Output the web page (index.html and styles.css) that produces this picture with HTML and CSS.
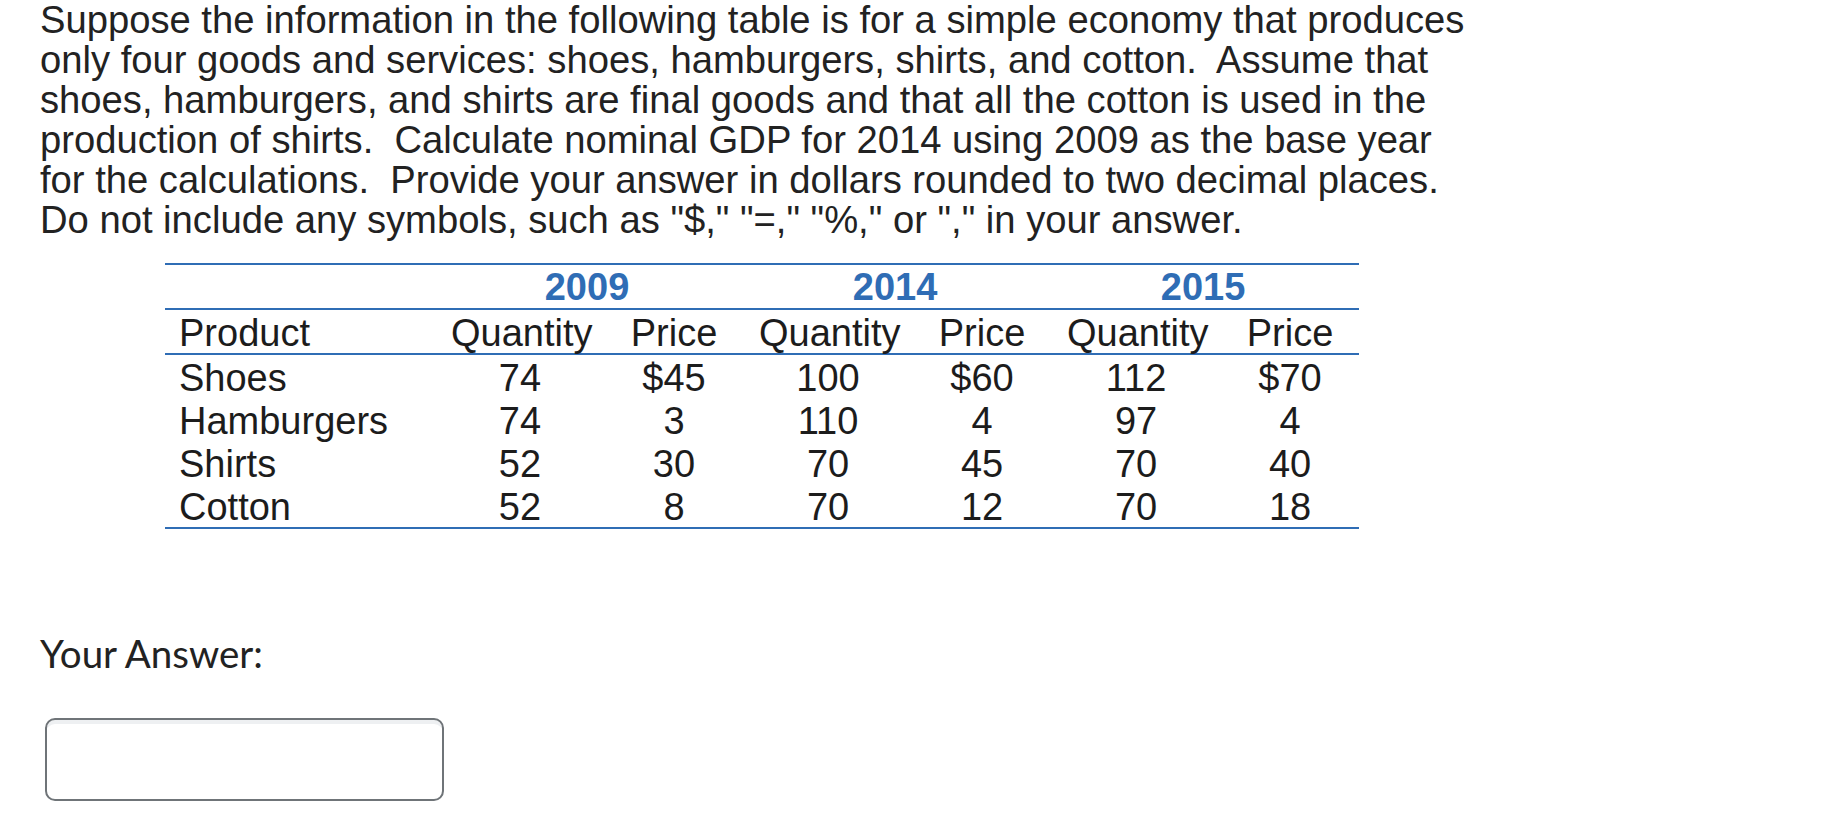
FILE: index.html
```html
<!DOCTYPE html>
<html lang="en">
<head>
<meta charset="utf-8">
<title>Question</title>
<link rel="stylesheet" href="styles.css">
</head>
<body>
<main class="page">
  <p class="question">Suppose the information in the following table is for a simple economy that produces<br>only four goods and services: shoes, hamburgers, shirts, and cotton.&nbsp; Assume that<br>shoes, hamburgers, and shirts are final goods and that all the cotton is used in the<br>production of shirts.&nbsp; Calculate nominal GDP for 2014 using 2009 as the base year<br>for the calculations.&nbsp; Provide your answer in dollars rounded to two decimal places.<br>Do not include any symbols, such as "$," "=," "%," or "," in your answer.</p>

  <table class="data">
    <colgroup>
      <col class="c-prod"><col class="c-num"><col class="c-num"><col class="c-num"><col class="c-num"><col class="c-num"><col class="c-num">
    </colgroup>
    <thead>
      <tr class="years">
        <th></th>
        <th colspan="2">2009</th>
        <th colspan="2">2014</th>
        <th colspan="2">2015</th>
      </tr>
      <tr class="heads">
        <th class="prod">Product</th>
        <th>Quantity</th><th>Price</th>
        <th>Quantity</th><th>Price</th>
        <th>Quantity</th><th>Price</th>
      </tr>
    </thead>
    <tbody>
      <tr><td class="prod">Shoes</td><td>74</td><td>$45</td><td>100</td><td>$60</td><td>112</td><td>$70</td></tr>
      <tr><td class="prod">Hamburgers</td><td>74</td><td>3</td><td>110</td><td>4</td><td>97</td><td>4</td></tr>
      <tr><td class="prod">Shirts</td><td>52</td><td>30</td><td>70</td><td>45</td><td>70</td><td>40</td></tr>
      <tr><td class="prod">Cotton</td><td>52</td><td>8</td><td>70</td><td>12</td><td>70</td><td>18</td></tr>
    </tbody>
  </table>

  <div class="answer">
    <label class="answer-label" for="ans">Your Answer:</label>
    <input class="answer-input" id="ans" type="text">
  </div>
</main>
</body>
</html>
```

FILE: styles.css
```css
html, body {
  margin: 0;
  padding: 0;
  background: #ffffff;
}

.page {
  padding: 0 0 0 40px;
}

.question {
  margin: 0;
  font-family: "Liberation Sans", Arial, sans-serif;
  font-size: 38.2px;
  line-height: 40px;
  color: #222222;
  white-space: nowrap;
}

.data {
  margin: 23px 0 0 125px;
  border-collapse: collapse;
  table-layout: fixed;
  width: 1194px;
  font-family: "Liberation Sans", Arial, sans-serif;
  font-size: 38px;
  line-height: 40px;
  color: #1c1c1c;
  border-top: 2px solid #2f6db5;
  border-bottom: 2px solid #2f6db5;
}

.c-prod { width: 270px; }
.c-num { width: 154px; }

.data th, .data td {
  padding: 3px 0 0 16px;
  text-align: center;
  font-weight: normal;
  white-space: nowrap;
  vertical-align: middle;
}

.data .prod {
  text-align: left;
  padding-left: 14px;
}

.years th {
  height: 42px;
  padding: 1px 4px 0 0;
  font-weight: bold;
  color: #2f6db5;
  border-bottom: 2px solid #2f6db5;
}

.heads th {
  height: 40px;
  border-bottom: 2px solid #2f6db5;
}

.data tbody td {
  height: 39.7px;
}

.answer {
  display: flex;
  flex-direction: column;
  align-items: flex-start;
}

.answer-label {
  display: block;
  margin-top: 101px;
  font-family: Lato, "Open Sans", sans-serif;
  font-size: 38.5px;
  line-height: 46px;
  color: #222222;
}

.answer-input {
  margin: 42px 0 0 5px;
  box-sizing: border-box;
  width: 399px;
  height: 83px;
  border: 2px solid #6f7478;
  border-radius: 10px;
  background: #ffffff;
  box-shadow: inset 0 5px 0 -1px #eef0f2;
  outline: none;
}
```
